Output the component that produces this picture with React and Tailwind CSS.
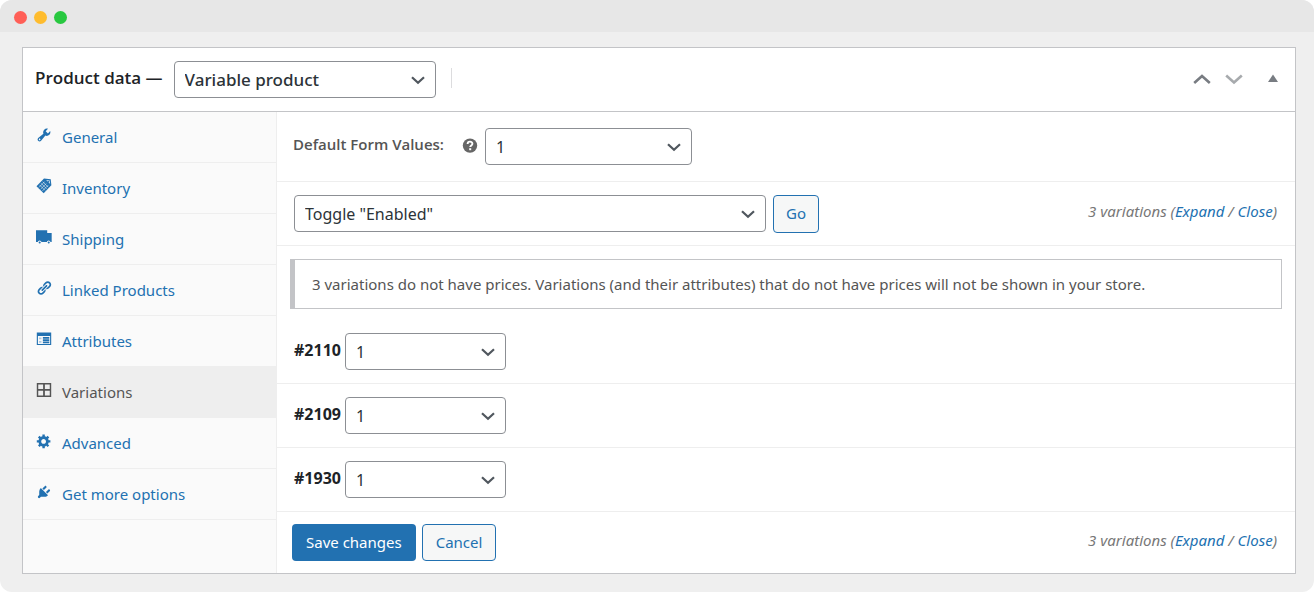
import React from "react";

const ICONS = {
  wrench: (
    <path
      fillRule="evenodd"
      d="M16.68 9.77c-1.34 1.34-3.3 1.67-4.95.99l-5.41 6.52c-.99.99-2.59.99-3.58 0s-.99-2.59 0-3.57l6.52-5.42c-.68-1.65-.35-3.61.99-4.95 1.28-1.28 3.12-1.62 4.72-1.06l-2.89 2.89 2.82 2.82 2.86-2.87c.53 1.58.18 3.39-1.08 4.65zM3.81 16.21c.4.39 1.04.39 1.43 0 .4-.4.4-1.04 0-1.43-.39-.4-1.03-.4-1.43 0-.39.39-.39 1.03 0 1.43z"
    />
  ),
  note: (
    <g>
      <path d="M0.6 10.2L10 0.6l8.4 1 .8 7.6L9.6 19.2z" />
      <path d="M4.4 8.6l6.8 6.8M6.4 6.6l6.8 6.8M8.4 4.6l6.8 6.8M3.6 11.8l7.2-7.2M5.8 14l7.2-7.2M8 16.2l7.2-7.2" stroke="#fafafa" strokeOpacity="0.75" strokeWidth="0.9" fill="none" />
      <path d="M12.6 2.4l4.6.6.5 4.4z" fill="#fafafa" fillOpacity="0.8" />
      <circle cx="15.6" cy="4.6" r="1" />
    </g>
  ),
  truck: (
    <g>
      <path d="M0 1.5h14v3.6h5.6V16.2h-1.4a2.4 2.4 0 0 0-4.7 0H6.9a2.4 2.4 0 0 0-4.7 0H0z" />
      <circle cx="4.6" cy="16.8" r="1.3" />
      <circle cx="15.9" cy="16.8" r="1.3" />
    </g>
  ),
  link: (
    <path d="M17.74 2.76c1.68 1.69 1.68 4.41 0 6.1l-1.53 1.52c-1.12 1.12-2.7 1.47-4.14 1.09l2.62-2.61.76-.77.76-.76c.84-.84.84-2.2 0-3.04-.84-.85-2.2-.85-3.04 0l-.77.76-3.38 3.38c-.37-1.44-.02-3.02 1.1-4.14l1.52-1.53c1.69-1.68 4.42-1.68 6.1 0zM8.59 13.43l5.34-5.34c.42-.42.42-1.1 0-1.52-.44-.43-1.13-.39-1.53 0l-5.33 5.34c-.42.42-.42 1.1 0 1.52.44.43 1.13.39 1.52 0zm-.76 2.29l4.14-4.15c.38 1.44.03 3.02-1.09 4.14l-1.52 1.53c-1.69 1.68-4.41 1.68-6.1 0-1.68-1.68-1.68-4.42 0-6.1l1.53-1.52c1.12-1.12 2.7-1.47 4.14-1.1l-4.14 4.15c-.85.84-.85 2.2 0 3.05.84.84 2.2.84 3.04 0z" />
  ),
  card: (
    <g>
      <path fillRule="evenodd" d="M1 2h18v15.6H1zM2.4 6.4v9.8h15.2V6.4z" />
      <path d="M8.6 7.4h8v2.4h-8zM8.6 10.4h8v2h-8zM8.6 13.2h8v2.2h-8z" />
      <path d="M3.8 8h3v2.2h-3zM3.8 12.4h3v2.2h-3z" fillOpacity="0.35" />
    </g>
  ),
  grid: <path fillRule="evenodd" d="M1 1.2h18v17.6H1zM2.8 3v5.8h6.1V3zM11.1 3v5.8h6.1V3zM2.8 11v6h6.1v-6zM11.1 11v6h6.1v-6z" />,
  gear: (
    <path d="M18 12h-2.18c-.17.7-.44 1.35-.81 1.93l1.54 1.54-2.1 2.1-1.54-1.54c-.58.36-1.23.63-1.91.79V19H8v-2.18c-.68-.16-1.33-.43-1.91-.79l-1.54 1.54-2.12-2.12 1.54-1.54c-.36-.58-.63-1.23-.79-1.91H1V9.03h2.17c.16-.7.44-1.35.8-1.94L2.43 5.55l2.1-2.1 1.54 1.54c.58-.37 1.24-.64 1.93-.81V2h3v2.18c.68.16 1.33.43 1.91.79l1.54-1.54 2.12 2.12-1.54 1.54c.36.59.64 1.24.8 1.94H18V12zm-8.5 1.5c1.66 0 3-1.34 3-3s-1.34-3-3-3-3 1.34-3 3 1.34 3 3 3z" />
  ),
  plug: (
    <path d="M13.11 4.36L9.87 7.6 8 5.73l3.24-3.24c.35-.34 1.05-.2 1.56.32.52.51.66 1.21.31 1.55zm-8 1.77l.91-1.12 9.01 9.01-1.19.84c-.71.71-2.63 1.16-3.82 1.16H6.14L4.9 17.26c-.59.59-1.54.59-2.12 0-.59-.58-.59-1.53 0-2.12l1.24-1.24v-3.88c0-1.13.4-3.19 1.09-3.89zm7.26 3.97l3.24-3.24c.34-.35 1.04-.21 1.55.31.52.51.66 1.21.31 1.55l-3.24 3.25z" />
  ),
};

const TABS = [
  { label: "General", icon: "wrench" },
  { label: "Inventory", icon: "note" },
  { label: "Shipping", icon: "truck" },
  { label: "Linked Products", icon: "link" },
  { label: "Attributes", icon: "card" },
  { label: "Variations", icon: "grid", active: true },
  { label: "Advanced", icon: "gear" },
  { label: "Get more options", icon: "plug" },
];

const VARIATIONS = ["2110", "2109", "1930"];

function Select({ options, className, textClass = "text-base text-[#2c3338]", ...rest }) {
  return (
    <div className={`grid items-center ${className}`}>
      <select
        {...rest}
        className={`col-start-1 row-start-1 h-[37px] w-full appearance-none rounded border border-[#8c8f94] bg-white pr-8 pl-[10px] ${textClass}`}
      >
        {options.map((o) => (
          <option key={o}>{o}</option>
        ))}
      </select>
      <svg viewBox="0 0 20 20" className="pointer-events-none col-start-1 row-start-1 mr-2 size-5 justify-self-end" aria-hidden="true">
        <path d="M4 7.2l6 5.6 6-5.6" fill="none" stroke="#50575e" strokeWidth="2.2" />
      </svg>
    </div>
  );
}

function Summary() {
  return (
    <p className="ml-auto pb-1 text-[15px] text-[#777777] italic">
      3 variations (
      <a href="#expand" className="text-[#2271b1]">Expand</a> / <a href="#close" className="text-[#2271b1]">Close</a>)
    </p>
  );
}

export default function App() {
  return (
    <div className="min-h-screen bg-white font-['Noto_Sans','Open_Sans',sans-serif]">
      <div className="flex min-h-screen flex-col overflow-hidden rounded-xl bg-[#efefef]">
        <div className="flex h-8 shrink-0 items-center gap-[7px] bg-[#e7e7e7] pt-[2px] pl-[14px]">
          <span className="size-[13px] rounded-full bg-[#ff5f57]" />
          <span className="size-[13px] rounded-full bg-[#febc2e]" />
          <span className="size-[13px] rounded-full bg-[#28c840]" />
        </div>

        <section className="mt-[15px] mr-[18px] mb-[18px] ml-[22px] flex grow flex-col border border-[#c3c4c7] bg-white">
          <header className="flex h-16 shrink-0 items-center border-b border-[#c3c4c7] pr-[17px] pl-3">
            <label htmlFor="product-type" className="pb-1 font-['Open_Sans'] text-[17px] font-semibold text-[#1d2327]">
              Product data —
            </label>
            <Select
              id="product-type"
              options={["Variable product", "Simple product"]}
              className="ml-[11px] w-[262px]"
              textClass="text-[17px] font-medium text-[#2c3338]"
            />
            <span className="mb-1 ml-[15px] h-5 w-px bg-[#dcdcde]" />
            <div className="ml-auto flex items-center pb-1">
              <button type="button" aria-label="Move up" className="mr-[14px]">
                <svg viewBox="0 0 18 18" className="size-[18px]"><path d="M1.2 14L9 7l7.8 7" fill="none" stroke="#787c82" strokeWidth="2.6" /></svg>
              </button>
              <button type="button" aria-label="Move down" className="mr-[25px]">
                <svg viewBox="0 0 18 18" className="size-[18px]"><path d="M1.2 6.5L9 13.5l7.8-7" fill="none" stroke="#a7aaad" strokeWidth="2.6" /></svg>
              </button>
              <button type="button" aria-label="Toggle panel">
                <svg viewBox="0 0 10 10" className="size-[10px]"><path d="M0 9L5 1.5 10 9z" fill="#787c82" /></svg>
              </button>
            </div>
          </header>

          <div className="flex grow">
            <nav className="w-[254px] shrink-0 border-r border-[#eeeeee] bg-[#fafafa]">
              {TABS.map((t) => (
                <a
                  key={t.label}
                  href={`#${t.icon}`}
                  className={`flex h-[51px] items-center gap-[10px] border-b border-[#eeeeee] pl-[13px] text-[15px] ${t.active ? "bg-[#eeeeee] text-[#555555]" : "text-[#2271b1]"}`}
                >
                  <svg viewBox="0 0 20 20" fill="currentColor" className="mb-1 size-4" aria-hidden="true">
                    {ICONS[t.icon]}
                  </svg>
                  {t.label}
                </a>
              ))}
            </nav>

            <div className="min-w-0 grow">
              <div className="flex h-[70px] items-center border-b border-[#eeeeee] pl-4">
                <label htmlFor="default-form" className="pb-1 font-['Open_Sans'] text-[15px] font-semibold text-[#555555]">
                  Default Form Values:
                </label>
                <svg viewBox="0 0 16 16" className="mb-1 ml-[18px] size-4" aria-hidden="true">
                  <circle cx="8" cy="8.6" r="7.2" fill="#666666" />
                  <path d="M5.6 7c0-3.2 4.8-3 4.8-.3 0 1.7-2.2 1.7-2.2 3.4" fill="none" stroke="#fff" strokeWidth="1.9" />
                  <rect x="7.2" y="11.2" width="2" height="2" fill="#fff" />
                </svg>
                <Select id="default-form" options={["1"]} className="ml-[7px] w-[207px]" />
              </div>

              <div className="flex h-16 items-center border-b border-[#eeeeee] pr-[18px] pl-[17px]">
                <Select aria-label="Bulk actions" options={['Toggle "Enabled"']} className="w-[472px]" />
                <button type="button" className="ml-[7px] h-[38px] rounded border border-[#2271b1] bg-[#f6f7f7] px-3 text-[15px] text-[#2271b1]">
                  Go
                </button>
                <Summary />
              </div>

              <div className="mx-[13px] mt-[13px] mb-[11px] border border-l-[5px] border-[#c3c4c7] px-[17px] py-3 text-[15px] leading-6 text-[#555555]">
                3 variations do not have prices. Variations (and their attributes) that do not have prices will not be shown in your store.
              </div>

              {VARIATIONS.map((id) => (
                <div key={id} className="flex h-16 items-center border-b border-[#eeeeee] pl-[17px]">
                  <label htmlFor={`variation-${id}`} className="w-[51px] pb-[3px] font-['Open_Sans'] text-base font-bold text-[#1d2327]">
                    #{id}
                  </label>
                  <Select id={`variation-${id}`} options={["1"]} className="w-[161px]" />
                </div>
              ))}

              <div className="flex items-center gap-[6px] pt-3 pr-[18px] pb-3 pl-[15px]">
                <button type="button" className="h-[37px] rounded bg-[#2271b1] px-[14px] text-[15px] text-white">
                  Save changes
                </button>
                <button type="button" className="h-[37px] rounded border border-[#2271b1] bg-[#f6f7f7] px-[13px] text-[15px] text-[#2271b1]">
                  Cancel
                </button>
                <Summary />
              </div>
            </div>
          </div>
        </section>
      </div>
    </div>
  );
}
